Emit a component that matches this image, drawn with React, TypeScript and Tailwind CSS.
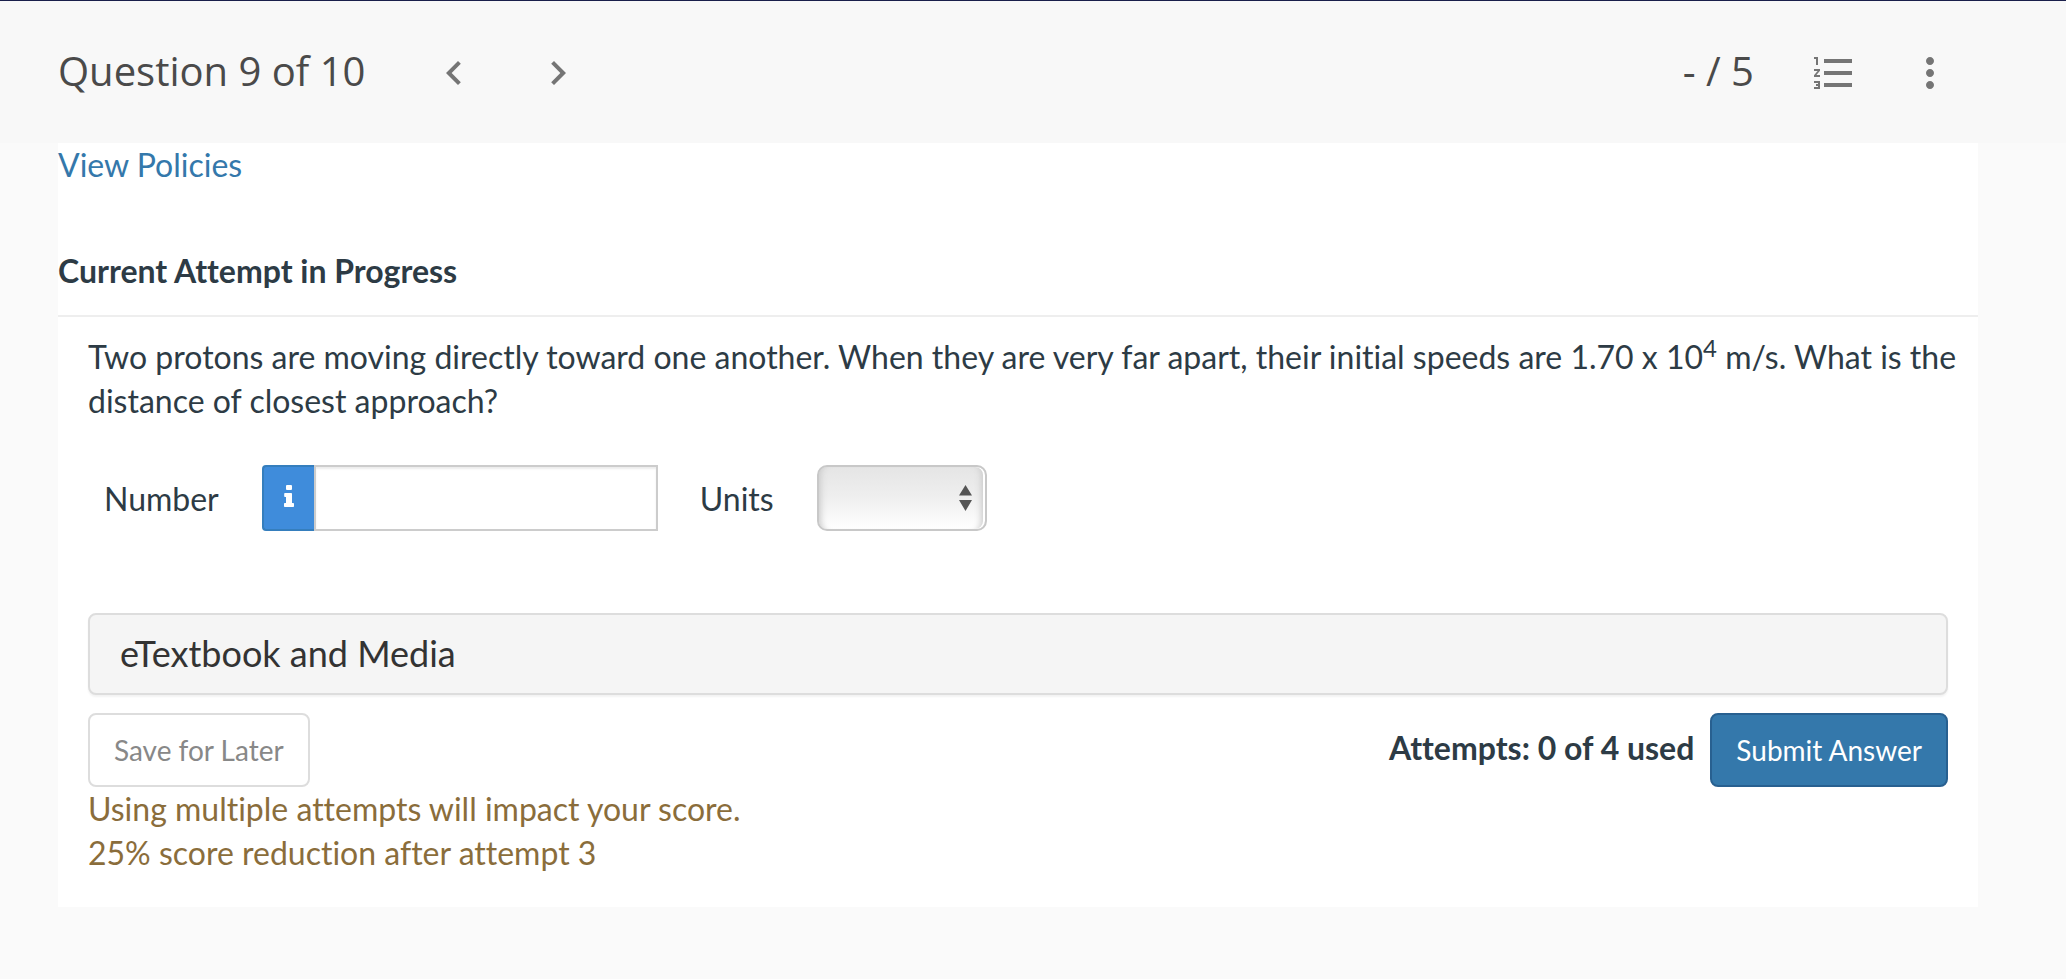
import { useState } from "react"
import type { ReactNode } from "react"
import { MdChevronLeft, MdChevronRight, MdFormatListNumbered, MdMoreVert } from "react-icons/md"

const UNITS = ["m", "cm", "mm", "µm", "nm", "pm"]

function IconButton({ label, children }: { label: string; children: ReactNode }) {
  return (
    <button type="button" aria-label={label} className="text-[#757575]">
      {children}
    </button>
  )
}

function Header() {
  return (
    <header className="flex h-[143px] items-center justify-between border-t border-[#1a1f4b] bg-[#f8f8f8] pt-0.5 pr-28 pl-[58px] font-['Open_Sans',sans-serif] text-[40px] text-[#4a4a4a]">
      <div className="flex items-center">
        <h1 className="mr-[65px] pb-1">Question 9 of 10</h1>
        <div className="flex items-center gap-14">
          <IconButton label="Previous question">
            <MdChevronLeft size={48} />
          </IconButton>
          <IconButton label="Next question">
            <MdChevronRight size={48} />
          </IconButton>
        </div>
      </div>
      <div className="flex items-center">
        <span className="mr-14 pb-1">- / 5</span>
        <div className="flex items-center gap-12">
          <IconButton label="Question list">
            <MdFormatListNumbered size={48} />
          </IconButton>
          <IconButton label="More options">
            <MdMoreVert size={48} />
          </IconButton>
        </div>
      </div>
    </header>
  )
}

function InfoIcon() {
  return (
    <svg width="10" height="22" viewBox="0 0 10 22" fill="currentColor" aria-hidden="true">
      <rect x="2" y="0" width="6" height="5" rx="1" />
      <path d="M1 8h6.200q.8 0 .8.800V18h1.200q.8 0 .8.800v2.400q0 .8-.8.800H.8q-.8 0-.8-.8v-2.400q0-.8.8-.8H2v-6H1q-.8 0-.8-.8V8.800Q.2 8 1 8z" />
    </svg>
  )
}

function AnswerFields() {
  const [value, setValue] = useState("")
  const [unit, setUnit] = useState("")

  return (
    <div className="mt-[42px] flex items-center pl-4">
      <label htmlFor="answer-number" className="mr-[43px] pt-0.5">
        Number
      </label>
      <div className="mr-[42px] flex h-[66px]">
        <button
          type="button"
          aria-label="Number format info"
          className="flex w-[52px] items-center justify-center rounded-l border-2 border-r-0 border-[#357ebd] bg-[#3f8cdb] pb-1 text-white"
        >
          <InfoIcon />
        </button>
        <input
          id="answer-number"
          type="text"
          value={value}
          onChange={(e) => setValue(e.target.value)}
          className="w-[344px] border-2 border-[#ccc] bg-white px-4 shadow-[inset_0_2px_2px_rgba(0,0,0,0.075)] outline-none"
        />
      </div>
      <label htmlFor="answer-units" className="mr-[43px] pt-0.5">
        Units
      </label>
      <div className="relative">
        <select
          id="answer-units"
          value={unit}
          onChange={(e) => setUnit(e.target.value)}
          className="block h-[66px] w-[170px] appearance-none rounded-[10px] border-2 border-[#c8c8c8] bg-linear-to-b from-[#e5e5e5] via-[#efefef] to-white px-4 shadow-[inset_-2px_0_0_#fff,inset_8px_0_6px_-6px_#ccc,inset_-10px_0_6px_-6px_#ccc]"
        >
          <option value=""></option>
          {UNITS.map((u) => (
            <option key={u} value={u}>
              {u}
            </option>
          ))}
        </select>
        <svg
          width="13"
          height="26"
          viewBox="0 0 13 26"
          fill="#555"
          aria-hidden="true"
          className="pointer-events-none absolute top-5 right-[15px]"
        >
          <path d="M6.500 0L13 10.500H0zM0 15h13L6.500 26z" />
        </svg>
      </div>
    </div>
  )
}

export default function App() {
  return (
    <div className="min-h-screen bg-[#fafafa] font-['Lato',sans-serif] text-[32px] leading-[44px] text-[#2d3b45] [font-variant-ligatures:none]">
      <Header />
      <main className="mr-[88px] ml-[58px] bg-white pb-8">
        <a href="#policies" className="block w-fit text-[#3478ab]">
          View Policies
        </a>

        <h2 className="mt-[62px] border-b-2 border-[#eee] pb-[22px] font-bold">Current Attempt in Progress</h2>

        <div className="px-[30px] pt-[18px]">
          {/* Question */}
          <p className="-mr-6">
            Two protons are moving directly toward one another. When they are very far apart, their initial speeds are
            1.70 x 10<sup className="text-[24px] leading-none">4</sup> m/s. What is the distance of closest approach?
          </p>

          <AnswerFields />

          {/* Resources */}
          <button
            type="button"
            className="mt-[82px] block w-full rounded-lg border-2 border-[#ddd] bg-[#f5f5f5] px-[30px] pt-4 pb-[18px] text-left text-[36px] text-[#333] shadow-[0_2px_2px_rgba(0,0,0,0.05)]"
          >
            eTextbook and Media
          </button>

          {/* Actions */}
          <div className="mt-[18px] flex items-center justify-between text-[28px]">
            <button type="button" className="h-[74px] rounded-lg border-2 border-[#ddd] bg-white px-6 text-[#888]">
              Save for Later
            </button>
            <div className="flex items-center gap-4">
              <span className="pb-1 text-[32px] font-bold">Attempts: 0 of 4 used</span>
              <button type="button" className="h-[74px] rounded-lg border-2 border-[#286090] bg-[#3478ab] px-6 text-white">
                Submit Answer
              </button>
            </div>
          </div>

          <p className="text-[#8a6d3b]">
            Using multiple attempts will impact your score.
            <br />
            25% score reduction after attempt 3
          </p>
        </div>
      </main>
    </div>
  )
}
